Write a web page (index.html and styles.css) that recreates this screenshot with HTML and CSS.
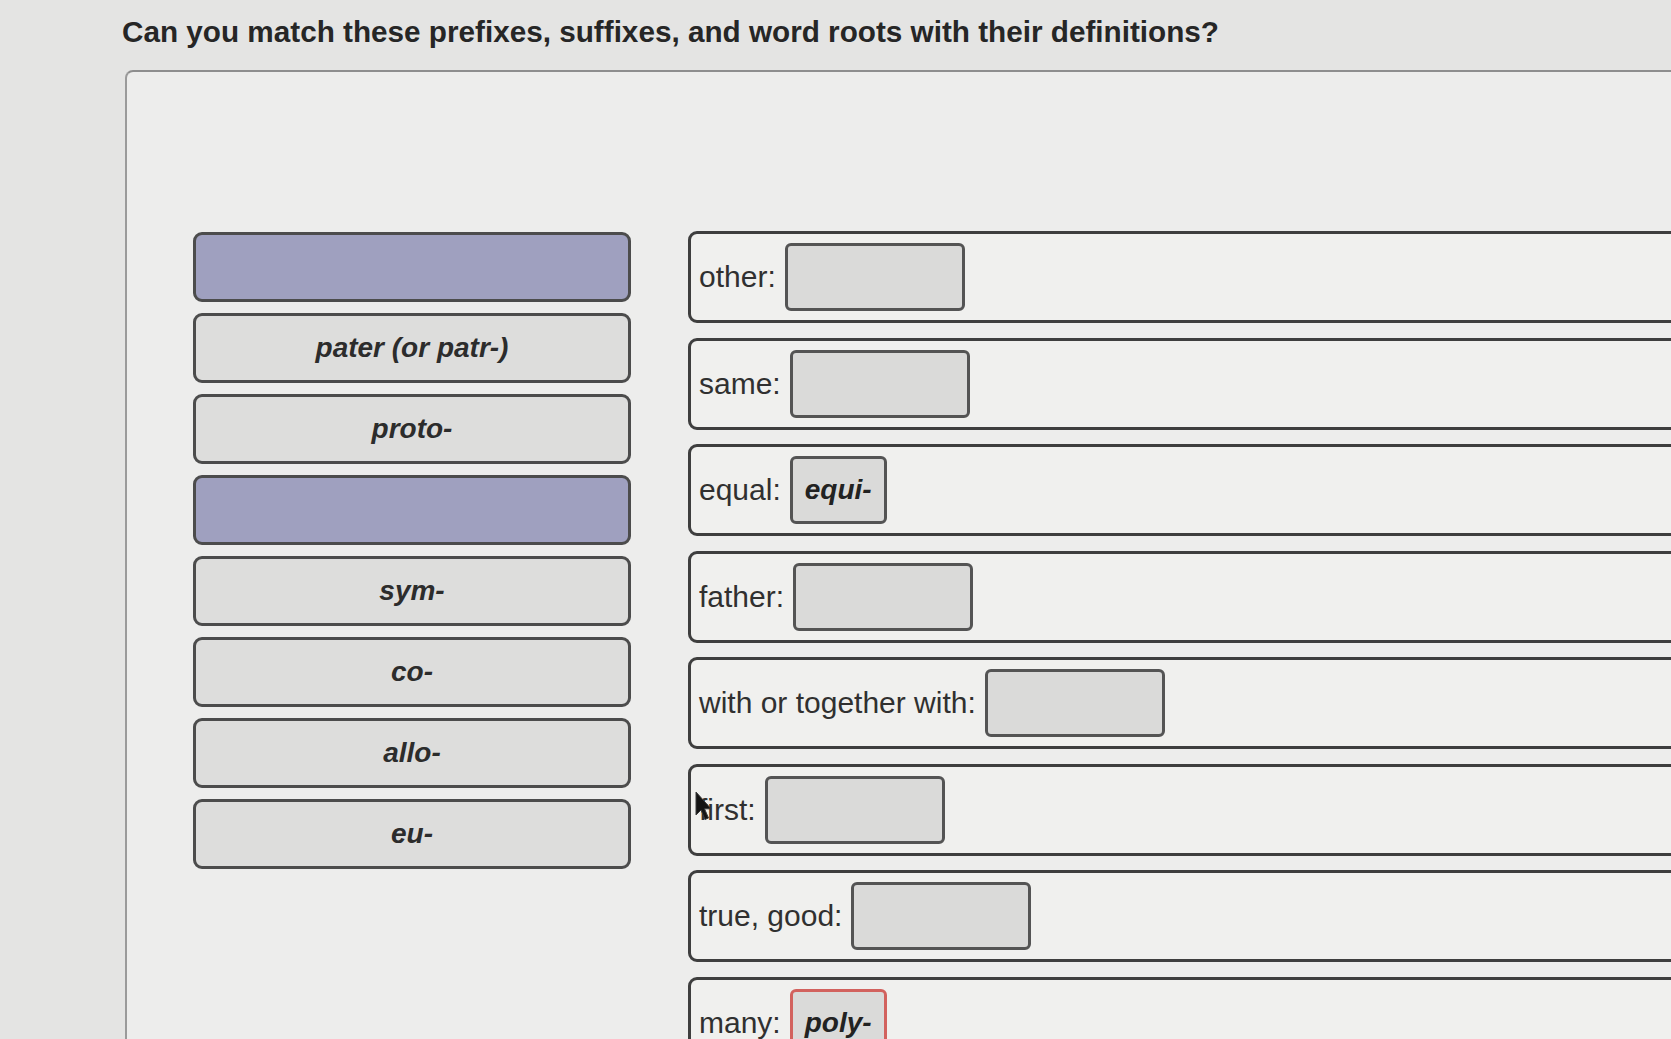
FILE: index.html
```html
<!DOCTYPE html>
<html lang="en">
<head>
<meta charset="utf-8">
<title>Match prefixes</title>
<link rel="stylesheet" href="styles.css">
</head>
<body>
<h1 class="title">Can you match these prefixes, suffixes, and word roots with their definitions?</h1>
<div class="panel">
  <div class="tiles">
    <div class="tile empty"></div>
    <div class="tile">pater (or patr-)</div>
    <div class="tile">proto-</div>
    <div class="tile empty"></div>
    <div class="tile">sym-</div>
    <div class="tile">co-</div>
    <div class="tile">allo-</div>
    <div class="tile">eu-</div>
  </div>
  <div class="rows">
    <div class="row"><span class="label">other:</span><span class="drop"></span></div>
    <div class="row"><span class="label">same:</span><span class="drop"></span></div>
    <div class="row"><span class="label">equal:</span><span class="drop filled">equi-</span></div>
    <div class="row"><span class="label">father:</span><span class="drop"></span></div>
    <div class="row"><span class="label">with or together with:</span><span class="drop"></span></div>
    <div class="row"><span class="label">first:</span><span class="drop"></span>
      <svg class="cursor" width="17" height="30" viewBox="0 0 17 30"><path d="M1 1 L1 24 L6 19 L10 28.5 L13.5 27 L9.5 17.8 L16 17.8 Z" fill="#141414" stroke="#3a3a3a" stroke-width="1"/></svg>
    </div>
    <div class="row"><span class="label">true, good:</span><span class="drop"></span></div>
    <div class="row"><span class="label">many:</span><span class="drop filled wrong">poly-</span></div>
  </div>
</div>
</body>
</html>
```
FILE: styles.css
```css
html, body {
  margin: 0;
  padding: 0;
}
body {
  background: #e4e4e3;
  font-family: "Liberation Sans", Arial, sans-serif;
  color: #2e2e2e;
  overflow: hidden;
  width: 1671px;
  height: 1039px;
}
.title {
  margin: 0;
  padding: 15px 0 0 122px;
  font-size: 29.7px;
  font-weight: bold;
  line-height: 34px;
  color: #262626;
  white-space: nowrap;
}
.panel {
  margin: 21px 0 0 125px;
  width: 1700px;
  height: 1100px;
  box-sizing: border-box;
  border-top: 2px solid #8e8e8e;
  border-left: 2px solid #9a9a9a;
  border-top-left-radius: 8px;
  background: #ededec;
  padding: 160px 0 0 66px;
  display: flex;
  align-items: flex-start;
  gap: 57px;
}
.tiles {
  width: 438px;
  flex: none;
  display: flex;
  flex-direction: column;
  gap: 11px;
}
.tile {
  height: 70px;
  box-sizing: border-box;
  border: 3px solid #4c4c4c;
  border-radius: 9px;
  background: #dddddc;
  display: flex;
  align-items: center;
  justify-content: center;
  font-size: 28px;
  font-weight: bold;
  font-style: italic;
  color: #2c2c2c;
}
.tile.empty {
  background: #9fa0bf;
}
.rows {
  width: 1100px;
  flex: none;
  display: flex;
  flex-direction: column;
  gap: 14.5px;
  margin-top: -1px;
}
.row {
  position: relative;
  height: 92px;
  box-sizing: border-box;
  border: 3px solid #3e3e3e;
  border-radius: 9px;
  background: #f0f0ee;
  display: flex;
  align-items: center;
  padding-left: 8px;
  gap: 9px;
}
.label {
  font-size: 30px;
  color: #303030;
}
.drop {
  width: 180px;
  height: 68px;
  box-sizing: border-box;
  border: 3px solid #545454;
  border-radius: 6px;
  background: #dadad9;
  display: flex;
  align-items: center;
  justify-content: center;
  font-size: 28px;
  font-weight: bold;
  font-style: italic;
  color: #222;
}
.drop.filled {
  width: auto;
  padding: 0 12px;
  height: 68px;
}
.drop.wrong {
  border-color: #d2625e;
}
.cursor {
  position: absolute;
  left: 4px;
  top: 24px;
}
```
